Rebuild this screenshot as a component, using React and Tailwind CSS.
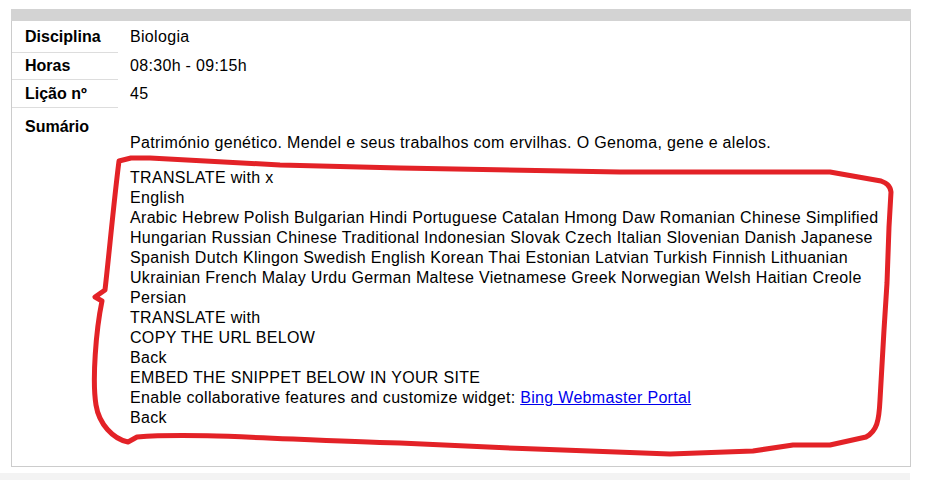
const ROWS = [
  { label: 'Disciplina', value: 'Biologia', pad: 'pt-[6px] pb-[5px]' },
  { label: 'Horas', value: '08:30h - 09:15h', pad: 'pt-[3px] pb-[3px]' },
  { label: 'Lição nº', value: '45', pad: 'pt-[4px] pb-[3px]' },
];

const LANG_LINES = [
  'Arabic Hebrew Polish Bulgarian Hindi Portuguese Catalan Hmong Daw Romanian Chinese Simplified',
  'Hungarian Russian Chinese Traditional Indonesian Slovak Czech Italian Slovenian Danish Japanese',
  'Spanish Dutch Klingon Swedish English Korean Thai Estonian Latvian Turkish Finnish Lithuanian',
  'Ukrainian French Malay Urdu German Maltese Vietnamese Greek Norwegian Welsh Haitian Creole',
  'Persian',
];

// hand-drawn red marker around the widget text
function Scribble() {
  return (
    <svg className="absolute left-0 top-0 pointer-events-none" width="942" height="480" viewBox="0 0 942 480">
      <path
        d="M 131 158 L 119 161 C 114 200, 109 255, 105 290 L 95 297 L 102 301 C 96 330, 92 380, 96 405 C 99 424, 113 439, 128 442 L 137 437 C 200 432, 300 441, 400 443 C 480 447, 600 452, 670 454 L 753 451 L 793 445 L 830 445 L 866 437 C 877 431, 879 421, 880 400 L 884 330 L 887 283 L 889 227 L 891 192 C 890 185, 886 183, 881 181 L 830 172 L 620 172 L 400 168 L 280 165 L 150 158 Z"
        fill="none"
        stroke="#e32227"
        strokeWidth="5"
        strokeLinejoin="round"
        strokeLinecap="round"
      />
    </svg>
  );
}

export default function App() {
  return (
    <div className="relative w-[942px] h-[480px] bg-white text-black text-[16px] leading-5 overflow-hidden" style={{ fontFamily: '"Liberation Sans", Arial, sans-serif' }}>
      <div className="pt-[9px] pl-[11px] w-[911px]">
        <div className="h-[12px] bg-[#d3d3d3]" />
        <div className="border-x border-b border-[#cccccc]">
          {ROWS.map(r => (
            <div key={r.label} className="flex">
              <div className={`w-[106px] shrink-0 pl-[13px] font-bold border-b border-[#dddddd] ${r.pad}`}>{r.label}</div>
              <div className={`pl-[12px] tracking-[0.32px] ${r.pad}`}>{r.value}</div>
            </div>
          ))}
          <div className="flex">
            <div className="w-[106px] shrink-0 pl-[13px] pt-[9px] font-bold">Sumário</div>
            <div className="pl-[12px] pt-[25px] pb-[38px] whitespace-nowrap tracking-[0.32px]">
              <div>Património genético. Mendel e seus trabalhos com ervilhas. O Genoma, gene e alelos.</div>
              <div className="mt-[15px]">
                <div>TRANSLATE with x</div>
                <div>English</div>
                {LANG_LINES.map(l => <div key={l}>{l}</div>)}
                <div>TRANSLATE with</div>
                <div>COPY THE URL BELOW</div>
                <div>Back</div>
                <div>EMBED THE SNIPPET BELOW IN YOUR SITE</div>
                <div>
                  Enable collaborative features and customize widget:{' '}
                  <a href="#" className="text-[#0000ee] underline">Bing Webmaster Portal</a>
                </div>
                <div>Back</div>
              </div>
            </div>
          </div>
        </div>
      </div>
      <div className="mt-[6px] w-[910px] h-[8px] bg-[#f3f3f3]" />
      <Scribble />
    </div>
  );
}
